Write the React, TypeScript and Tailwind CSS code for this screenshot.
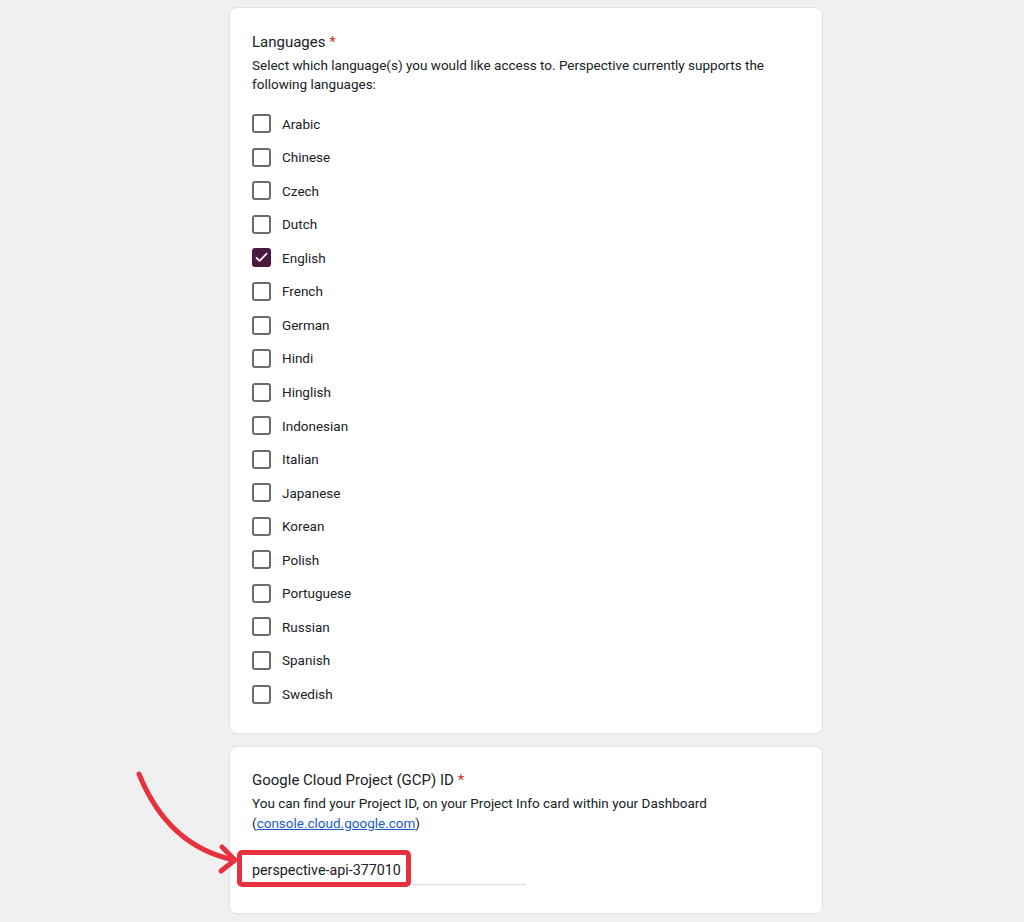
import React from "react";

const languages = [
  "Arabic",
  "Chinese",
  "Czech",
  "Dutch",
  "English",
  "French",
  "German",
  "Hindi",
  "Hinglish",
  "Indonesian",
  "Italian",
  "Japanese",
  "Korean",
  "Polish",
  "Portuguese",
  "Russian",
  "Spanish",
  "Swedish",
];

function Checkbox({ checked }: { checked: boolean }) {
  if (checked) {
    return (
      <div className="w-[19px] h-[19px] rounded-[3px] bg-[#4d1a3f] flex items-center justify-center">
        <svg width="15" height="15" viewBox="0 0 24 24" fill="none">
          <path d="M4 12.5l5 5L20 6" stroke="#ffffff" strokeWidth="2.8" strokeLinecap="round" strokeLinejoin="round" />
        </svg>
      </div>
    );
  }
  return <div className="w-[19px] h-[19px] rounded-[3px] border-2 border-[#6b6b6b] bg-white" />;
}

export default function App() {
  return (
    <div
      className="relative min-h-[922px] w-[1024px] bg-[#f1f0f0] pt-[7px] pl-[229px] text-[#202124]"
      style={{ fontFamily: "Roboto, 'Liberation Sans', Arial, sans-serif" }}
    >
      <div className="w-[594px] flex flex-col gap-[12px]">
        {/* Card 1 */}
        <div className="bg-white rounded-[8px] border border-[#e3e1e1] pt-[22px] pb-[21px] pl-[22px] pr-[23px] h-[727px]">
          <div className="text-[15px] leading-[24px]">
            Languages <span className="text-[#d93025]">*</span>
          </div>
          <div className="mt-[2px] text-[13.5px] leading-[19px]">
            Select which language(s) you would like access to. Perspective currently supports the
            <br />
            following languages:
          </div>
          <div className="mt-[13px] flex flex-col">
            {languages.map((l) => (
              <div key={l} className="h-[33.55px] flex items-center gap-[11px]">
                <Checkbox checked={l === "English"} />
                <span className="text-[13.5px]">{l}</span>
              </div>
            ))}
          </div>
        </div>

        {/* Card 2 */}
        <div className="bg-white rounded-[8px] border border-[#e3e1e1] pt-[21px] pb-[29px] pl-[22px] pr-[23px] h-[168px]">
          <div className="text-[15px] leading-[24px]">
            Google Cloud Project (GCP) ID <span className="text-[#d93025]">*</span>
          </div>
          <div className="mt-[1px] text-[13.5px] leading-[20px]">
            You can find your Project ID, on your Project Info card within your Dashboard
            <br />(
            <span className="text-[#1a5bc4] underline">console.cloud.google.com</span>)
          </div>
          <div className="relative mt-[20px] w-[274px] h-[32px] border-b border-[#dcdcdc] flex items-center">
            <span className="text-[14.3px] text-[#202124] pt-[5px]">perspective-api-377010</span>
            <div className="absolute left-[-15px] top-[-3px] w-[174px] h-[37px] border-[5px] border-[#e8313f] rounded-[5px]" />
          </div>
        </div>
      </div>

      {/* Annotation arrow */}
      <svg
        className="absolute left-0 top-0 pointer-events-none"
        width="1024"
        height="922"
        viewBox="0 0 1024 922"
        fill="none"
      >
        <path
          d="M139 774 Q168 846 234 860"
          stroke="#e8313f"
          strokeWidth="5"
          strokeLinecap="round"
          fill="none"
        />
        <path
          d="M222 847 L235 860 L221 871"
          stroke="#e8313f"
          strokeWidth="5"
          strokeLinecap="round"
          strokeLinejoin="round"
          fill="none"
        />
      </svg>
    </div>
  );
}
